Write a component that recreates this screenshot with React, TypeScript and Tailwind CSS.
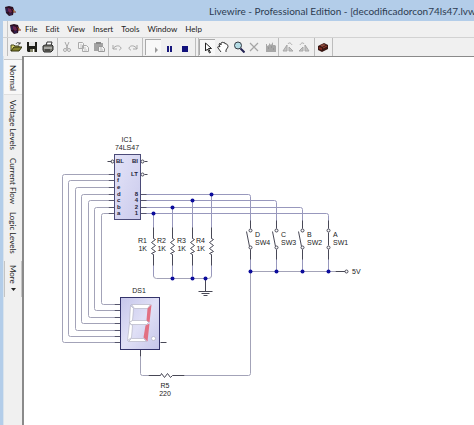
import type { ReactNode } from "react";

const menus = ["File", "Edit", "View", "Insert", "Tools", "Window", "Help"];
const views = ["Normal", "Voltage Levels", "Current Flow", "Logic Levels"];

function Logo() {
    return (
        <svg viewBox="0 0 12 12" className="h-3 w-3 shrink-0" aria-hidden="true">
            <path d="M0 2 4 1 8 2 9 5 8 10 4 11 1 8Z" fill="#2b1022" />
            <path d="M3 3 6 4 7 7 5 8 3 6Z" fill="#6c2450" />
            <path d="M2 3v4M4 9h3" stroke="#342c73" />
            <path d="M7 4 9 6M8 7h3" stroke="#7a2318" />
            <path d="M8 6h2" stroke="#a0762c" />
        </svg>
    );
}

function Tool({ label, className = "w-4", children }: { label: string; className?: string; children: ReactNode }) {
    return (
        <button type="button" aria-label={label} className={`flex h-4 shrink-0 items-center justify-center ${className}`}>
            <svg viewBox="0 0 12 12" className="h-3 w-3 shrink-0" fill="none">
                {children}
            </svg>
        </button>
    );
}

function Group({ className = "", children }: { className?: string; children: ReactNode }) {
    return <div className={`flex h-full shrink-0 items-center border-r border-[#bdbdbd] ${className}`}>{children}</div>;
}

function Toolbar() {
    return (
        <div className="flex h-[19px] items-center border-t border-[#d2d2d2] pl-1">
            <Group className="w-[51px] border-l">
                <Tool label="Open">
                    <path d="M1 10V4h3l1 1h4v2" fill="#d8d46c" stroke="#45451a" />
                    <path d="M1 10 4 6h8l-3 4Z" fill="#86842c" stroke="#33330f" />
                    <path d="M6 3c1-2 3-2 4 0M10 1v2H8" stroke="#333" strokeWidth=".8" />
                </Tool>
                <Tool label="Save">
                    <path d="M1 1h10v10H2L1 10Z" fill="#20201a" />
                    <path d="M3 1h6v4H3Z" fill="#e5e5e5" />
                    <path d="M4 8h5v3H4Z" fill="#85856a" />
                    <path d="M7 8h1v3H7Z" fill="#fff" />
                </Tool>
                <Tool label="Print">
                    <path d="M4 5 5 1h5L9 5" fill="#fff" stroke="#333" />
                    <path d="M1 5 3 4h7l1 1v4l-2 2H2L1 9Z" fill="#77776f" stroke="#2c2c2c" />
                    <path d="M2 7h8" stroke="#ddd" />
                    <path d="M3 9h5" stroke="#222" />
                </Tool>
            </Group>
            <Group className="w-[51px] pl-px">
                <Tool label="Cut">
                    <path d="M4 1 7 8M8 1 5 8" stroke="#aaa" />
                    <circle cx="4" cy="9" r="1.500" stroke="#aaa" />
                    <circle cx="8" cy="9" r="1.500" stroke="#aaa" />
                </Tool>
                <Tool label="Copy">
                    <path d="M1.500 1.500h4l1 1v5h-5ZM5.500 4.500h4l2 2v4h-6Z" fill="#f4f4f4" stroke="#aaa" />
                    <path d="M3 4h2M3 6h2M7 7h2M7 9h3" stroke="#bbb" strokeWidth=".8" />
                </Tool>
                <Tool label="Paste">
                    <path d="M1 2h9v8H1Z" fill="#a3a3a3" />
                    <path d="M3 1h5v2H3Z" fill="#888" />
                    <path d="M5.500 5.500h4l2 2v3h-6Z" fill="#f1f1f1" stroke="#999" />
                    <path d="M7 7h2M7 9h3" stroke="#aaa" strokeWidth=".8" />
                </Tool>
            </Group>
            <Group className="w-[34px]">
                <Tool label="Undo">
                    <path d="M2 4v4h4M2 8c2-4 7-4 8-1 0 1-1 2-2 2" stroke="#a7a7a7" />
                </Tool>
                <Tool label="Redo">
                    <path d="M10 4v4H6M10 8C8 4 3 4 2 7c0 1 1 2 2 2" stroke="#a7a7a7" />
                </Tool>
            </Group>
            <Group className="w-[53px] pl-0.5">
                <Tool label="Run" className="w-4 border-t border-l border-[#aaa] bg-[#f8f8f8]">
                    <path d="M7 5v6l3-3Z" fill="#999" />
                </Tool>
                <Tool label="Pause">
                    <path d="M4 5h2v6H4ZM7 5h2v6H7Z" fill="#17177c" />
                </Tool>
                <Tool label="Stop">
                    <path d="M3 5h6v6H3Z" fill="#11117c" />
                </Tool>
            </Group>
            <Group className="ml-0.5 w-[81px] border-l">
                <Tool label="Select" className="w-4 border-t border-l border-[#aaa] bg-[#f8f8f8]">
                    <path d="M3.500 1v8l2-2 2 4 1-.5-2-4h3Z" fill="#fff" stroke="#222" />
                </Tool>
                <Tool label="Pan">
                    <path d="M4 11 1 7c-1-2 1-2 2-1L2 3c1-1 1-1 2 1V2c1-1 2-1 2 0 1-1 2-1 2 1 1-1 2 0 2 1 1 0 1 1 1 2L9 9v2" fill="#fff" stroke="#222" strokeWidth=".9" />
                </Tool>
                <Tool label="Zoom">
                    <circle cx="5" cy="4.500" r="3.500" fill="#b4dce5" stroke="#343a43" />
                    <path d="m7.500 7.500 4 4" stroke="#222252" strokeWidth="2" />
                </Tool>
                <Tool label="Delete">
                    <path d="m1 2 8 8M9 2 1 10" stroke="#a5a5a5" strokeWidth="1.200" />
                </Tool>
                <Tool label="Graph">
                    <path d="M1 3h1v2l2-1V2l2 2 2-3v3h2l1 1v6H1Z" fill="#a7a7a7" />
                    <path d="M3 7h1M6 6h1M8 8h1" stroke="#888" />
                </Tool>
            </Group>
            <Group className="w-9 pl-px">
                <Tool label="Rotate">
                    <path d="M1 10 5 4v6ZM7 6l4 4H7Z" fill="#c6c6c6" stroke="#a6a6a6" />
                    <path d="M6 3c1-2 3-1 4 1" stroke="#aaa" />
                </Tool>
                <Tool label="Mirror">
                    <path d="M11 10 7 4v6ZM5 6l-4 4h4Z" fill="#c6c6c6" stroke="#a6a6a6" />
                    <path d="M6 3C5 1 3 2 2 4" stroke="#aaa" />
                </Tool>
            </Group>
            <Group className="w-[18px]">
                <Tool label="Library">
                    <path d="m1 5 6-3 4 2v4l-6 3-4-2Z" fill="#381713" />
                    <path d="m2 6 3 1v2L2 8Z" fill="#862a20" />
                    <path d="m3 4 4-1 2 1-4 2Z" fill="#8c4b3d" />
                    <path d="M6 7 10 5" stroke="#9d3c2c" />
                </Tool>
            </Group>
        </div>
    );
}

// left bus: x of the vertical run, y at the decoder, y at the display
const segments = [
    { pin: "g", x: 62, top: 174, bottom: 342 },
    { pin: "f", x: 68, top: 180, bottom: 336 },
    { pin: "e", x: 75, top: 187, bottom: 330 },
    { pin: "d", x: 81, top: 194, bottom: 323 },
    { pin: "c", x: 88, top: 200, bottom: 317 },
    { pin: "b", x: 94, top: 207, bottom: 310 },
    { pin: "a", x: 101, top: 213, bottom: 304 },
];

const inputs = [
    { pin: "8", y: 194, res: "R4", rx: 211, sw: "SW4", name: "D", sx: 250 },
    { pin: "4", y: 200, res: "R3", rx: 192, sw: "SW3", name: "C", sx: 276 },
    { pin: "2", y: 207, res: "R2", rx: 172, sw: "SW2", name: "B", sx: 302 },
    { pin: "1", y: 213, res: "R1", rx: 153, sw: "SW1", name: "A", sx: 328 },
];

function Dot({ x, y }: { x: number; y: number }) {
    return <circle cx={x} cy={y} r="2" fill="#0c0c9c" />;
}

function Circuit() {
    return (
        <svg
            width="450"
            height="368"
            viewBox="24 57 450 368"
            className="block shrink-0"
            fontFamily="'Liberation Sans', Arial, sans-serif"
            fontSize="7"
            role="img"
            aria-label="Decoder circuit"
        >
            <defs>
                <linearGradient id="chip" x1="0" y1="0" x2="1" y2="1">
                    <stop offset="0" stopColor="#e3e3f8" />
                    <stop offset="1" stopColor="#cbcbec" />
                </linearGradient>
                <linearGradient id="display" x1="0" y1="0" x2="1" y2="1">
                    <stop offset="0" stopColor="#c6c6ea" />
                    <stop offset=".5" stopColor="#e0e0f6" />
                    <stop offset="1" stopColor="#c6c6ea" />
                </linearGradient>
            </defs>
            <g transform="translate(.5 .5)" fill="none" stroke="#a3a3b8">
                {segments.map((s) => (
                    <g key={s.pin}>
                        <path d={`M108 ${s.top}H${s.x + 2}q-2 0-2 2V${s.bottom - 2}q0 2 2 2H114`} />
                        <path d={`M108 ${s.top}h6M114 ${s.bottom}h6`} stroke="#55556c" />
                    </g>
                ))}
                {inputs.map((n) => (
                    <g key={n.pin}>
                        <path d={`M140 ${n.y}H${n.sx - 2}q2 0 2 2V228M${n.sx} 249V271`} stroke="#9898bd" />
                        <path d={`M${n.rx} ${n.y}V238M${n.rx} 254V276`} stroke="#9898bd" />
                        <path d={`M140 ${n.y}h6`} stroke="#55556c" />
                        <path d={`M${n.rx} 227V238l2 1-4 3 4 3-4 3 4 3-4 2 2 1V265`} stroke="#484856" />
                        <path d={`M${n.sx} 220V228M${n.sx} 249V259`} stroke="#484856" />
                        <path d={n.name === "A" ? "M328 232V245" : `M${n.sx - 4} 231l3 15`} stroke="#484856" />
                        <circle cx={n.sx} cy="230" r="1.500" fill="#fff" stroke="#484856" />
                        <circle cx={n.sx} cy="247" r="1.500" fill="#fff" stroke="#484856" />
                    </g>
                ))}
                <path d="M153 275q0 3 3 3H208q3 0 3-3" />
                <path d="M205 278V291M198 291h14M201 293h8M203 295h4" stroke="#484856" />
                <path d="M250 271H335M250 271V373q0 2-2 2H184M140 356V373q0 2 2 2h6" />
                <path d="M335 271h10M140 349v7M148 375H160l1-2 3 4 3-4 3 4 2-2H184M160 342h6" stroke="#484856" />
                <circle cx="346" cy="271" r="1.500" fill="#fff" stroke="#484856" />
                <path d="M107 161h4M144 161h3M144 174h3" stroke="#484856" />
                <circle cx="112" cy="161" r="1.500" stroke="#484856" />
                <circle cx="142" cy="161" r="1.500" stroke="#484856" />
                <circle cx="142" cy="174" r="1.500" stroke="#484856" />
                <rect x="114" y="154" width="26" height="65" fill="url(#chip)" stroke="#4b4b78" />
                <rect x="120" y="297" width="39" height="52" fill="url(#display)" stroke="#34346b" />
                <g stroke="#a0a0b0" strokeWidth=".5" fill="#fff">
                    <path d="M131 304h19l-3 4H134Z" />
                    <path d="m130 305 3 3-1 12-3 2Z" />
                    <path d="m129 323 3 2-1 12-4 3Z" />
                    <path d="m129 322 3-2h14l2 2-2 2h-15Z" />
                    <path d="m128 341 3-3h12l3 3Z" />
                    <circle cx="153" cy="338" r="2" />
                </g>
                <path d="m147 308 4-4-2 18-3-2ZM145 325l4-2-2 18-4-4Z" fill="#e27082" stroke="none" />
            </g>
            <g transform="translate(.5 .5)">
                {inputs.map((n) => (
                    <g key={n.pin}>
                        <Dot x={n.rx} y={n.y} />
                        <Dot x={n.sx} y={271} />
                    </g>
                ))}
                <Dot x={172} y={278} />
                <Dot x={192} y={278} />
                <Dot x={205} y={278} />
            </g>
            <g fill="#222">
                <text x="127" y="142" textAnchor="middle">IC1</text>
                <text x="127" y="150" textAnchor="middle">74LS47</text>
                <text x="139" y="293" textAnchor="middle">DS1</text>
                <text x="165" y="388" textAnchor="middle">R5</text>
                <text x="165" y="396" textAnchor="middle">220</text>
                <text x="352" y="274">5V</text>
                {inputs.map((n) => (
                    <g key={n.pin}>
                        <text x={n.rx - 6} y="243" textAnchor="end">{n.res}</text>
                        <text x={n.rx - 6} y="251" textAnchor="end">1K</text>
                        <text x={n.sx + 5} y="237">{n.name}</text>
                        <text x={n.sx + 5} y="245">{n.sw}</text>
                    </g>
                ))}
            </g>
            <g fill="#222238" fontSize="6" fontWeight="bold">
                <text x="116" y="163">BL</text>
                <text x="138" y="163" textAnchor="end">BI</text>
                <text x="138" y="176" textAnchor="end">LT</text>
                {segments.map((s) => (
                    <text key={s.pin} x="117" y={s.top + 2}>{s.pin}</text>
                ))}
                {inputs.map((n) => (
                    <text key={n.pin} x="138" y={n.y + 2} textAnchor="end">{n.pin}</text>
                ))}
            </g>
        </svg>
    );
}

export default function App() {
    return (
        <div className="flex min-h-screen w-full flex-col overflow-hidden bg-[#b3cde9] pl-[3px] font-[Lato,'Open_Sans',sans-serif] text-[#222]">
            <header className="flex h-[21px] items-center overflow-hidden pl-0.5">
                <Logo />
                <h1 className="ml-48 text-[10px] leading-4 whitespace-nowrap text-[#2c3b50]">
                    Livewire - Professional Edition - [decodificadorcon74ls47.lvw
                </h1>
            </header>
            <div className="bg-[#f0f0f0]">
                <nav className="flex h-4 items-center pl-1" aria-label="Main menu">
                    <div className="flex h-full items-center border-l border-[#c8c8c8] pl-0.5">
                        <Logo />
                    </div>
                    <div className="ml-[3px] flex gap-2">
                        {menus.map((menu) => (
                            <button key={menu} type="button" className="text-[8px] leading-4">
                                {menu}
                            </button>
                        ))}
                    </div>
                </nav>
                <Toolbar />
            </div>
            <div className="flex flex-1">
                <aside className="flex w-[19px] shrink-0 flex-col border-l border-[#d9e3ec] bg-[#f0f0f0]">
                    <div className="h-1 shrink-0 border-b border-[#c8c8c8]" />
                    <div className="flex flex-col" role="tablist" aria-label="View" aria-orientation="vertical">
                        {views.map((view, i) => (
                            <button
                                key={view}
                                type="button"
                                role="tab"
                                aria-selected={i === 0}
                                className="w-full pt-[5px] pb-[3px] text-[8px] leading-4 whitespace-nowrap [writing-mode:vertical-rl] aria-selected:border-b aria-selected:border-[#e0e0e0] aria-selected:bg-[#f8f8f8]"
                            >
                                {view}
                            </button>
                        ))}
                    </div>
                    <button
                        type="button"
                        className="mt-1 flex h-9 w-full items-center justify-center gap-1 border-y border-[#c4c4c4] text-[8px] leading-4 [writing-mode:vertical-rl]"
                    >
                        More
                        <svg viewBox="0 0 5 4" className="h-1 w-[5px]" aria-hidden="true">
                            <path d="M0 0h5L2.500 3Z" fill="#222" />
                        </svg>
                    </button>
                </aside>
                <main className="min-w-0 flex-1 overflow-hidden border-t border-l-2 border-[#8a8a8a] bg-white">
                    <Circuit />
                </main>
            </div>
        </div>
    );
}
